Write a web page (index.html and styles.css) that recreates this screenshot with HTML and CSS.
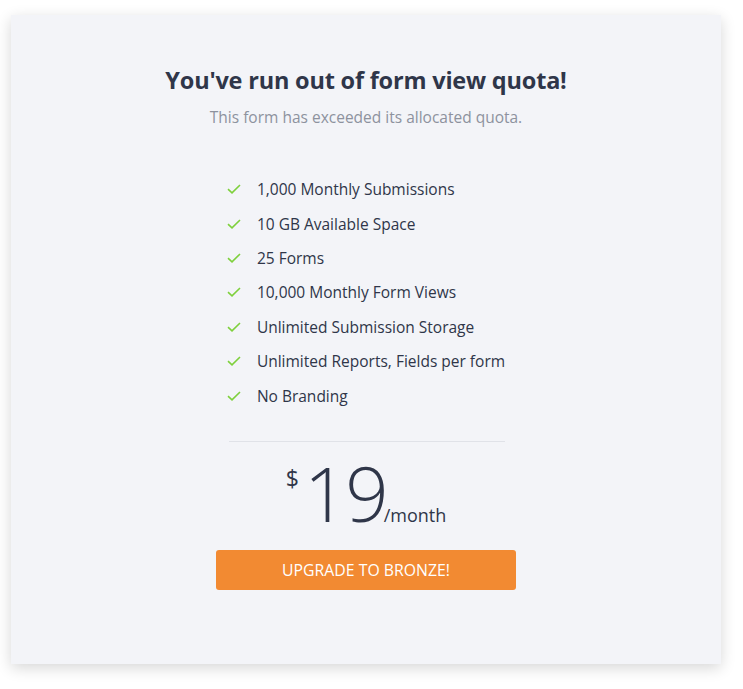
FILE: index.html
```html
<html>
<head>
	<title>Quota exceeded</title>
	<link rel="stylesheet" href="styles.css">
</head>
<body>

	<div class="card">
		<h1 class="title">You've run out of form view quota!</h1>
		<p class="subtitle">This form has exceeded its allocated quota.</p>

		<div class="plan">
			<ul class="features">
				<li><svg class="check" viewBox="0 0 14 10"><path d="M1 5.2l4 3.6L13 1"/></svg>1,000 Monthly Submissions</li>
				<li><svg class="check" viewBox="0 0 14 10"><path d="M1 5.2l4 3.6L13 1"/></svg>10 GB Available Space</li>
				<li><svg class="check" viewBox="0 0 14 10"><path d="M1 5.2l4 3.6L13 1"/></svg>25 Forms</li>
				<li><svg class="check" viewBox="0 0 14 10"><path d="M1 5.2l4 3.6L13 1"/></svg>10,000 Monthly Form Views</li>
				<li><svg class="check" viewBox="0 0 14 10"><path d="M1 5.2l4 3.6L13 1"/></svg>Unlimited Submission Storage</li>
				<li><svg class="check" viewBox="0 0 14 10"><path d="M1 5.2l4 3.6L13 1"/></svg>Unlimited Reports, Fields per form</li>
				<li><svg class="check" viewBox="0 0 14 10"><path d="M1 5.2l4 3.6L13 1"/></svg>No Branding</li>
			</ul>
			<hr class="divider">
		</div>

		<div class="price">
			<span class="currency">$</span><span class="amount">19</span><span class="period">/month</span>
		</div>

		<button type="button" class="button">UPGRADE TO BRONZE!</button>
	</div>

</body>
</html>
```

FILE: styles.css
```css
body {
	background: white;
	margin: 0;
	padding: 15px 22px 25px 11px;
	font-family: "Open Sans", "Liberation Sans", sans-serif;
	color: #2f3649;
}
.card {
	background: #f3f4f8;
	height: 649px;
	box-sizing: border-box;
	box-shadow: 0 4px 14px rgba(0, 0, 0, 0.16);
	text-align: center;
	padding-top: 48px;
}
.title {
	margin: 0;
	font-size: 23.5px;
	font-weight: 700;
	line-height: 34px;
	letter-spacing: -0.2px;
}
.subtitle {
	margin: 10px 0 0;
	font-size: 15.5px;
	line-height: 20px;
	color: #8d929e;
}
.plan {
	display: inline-block;
	margin-top: 45px;
	text-align: left;
}
.features {
	list-style: none;
	margin: 0;
	padding: 0;
}
.features li {
	display: flex;
	align-items: center;
	height: 34.4px;
	font-size: 15.5px;
	color: #2f3649;
}
.check {
	width: 14px;
	height: 10px;
	margin: 0 16px 0 0;
	fill: none;
	stroke: #7ed03c;
	stroke-width: 1.6;
}
.divider {
	border: none;
	border-top: 1px solid #e0e2e8;
	margin: 28px 0 0 2px;
}
.price {
	margin-top: 13px;
	height: 80px;
	display: flex;
	justify-content: center;
	align-items: baseline;
	line-height: 1;
}
.currency {
	font-size: 23px;
	align-self: flex-start;
	margin: 12px 5px 0 0;
}
.amount {
	font-size: 76px;
	font-weight: 300;
	letter-spacing: -2px;
}
.period {
	font-size: 18px;
	margin-left: -3px;
}
.button {
	display: block;
	margin: 15px auto 0;
	width: 300px;
	height: 40px;
	background: #f28a32;
	color: white;
	border: none;
	border-radius: 3px;
	font-family: "Open Sans", "Liberation Sans", sans-serif;
	font-size: 15.8px;
	padding: 0;
}
```
